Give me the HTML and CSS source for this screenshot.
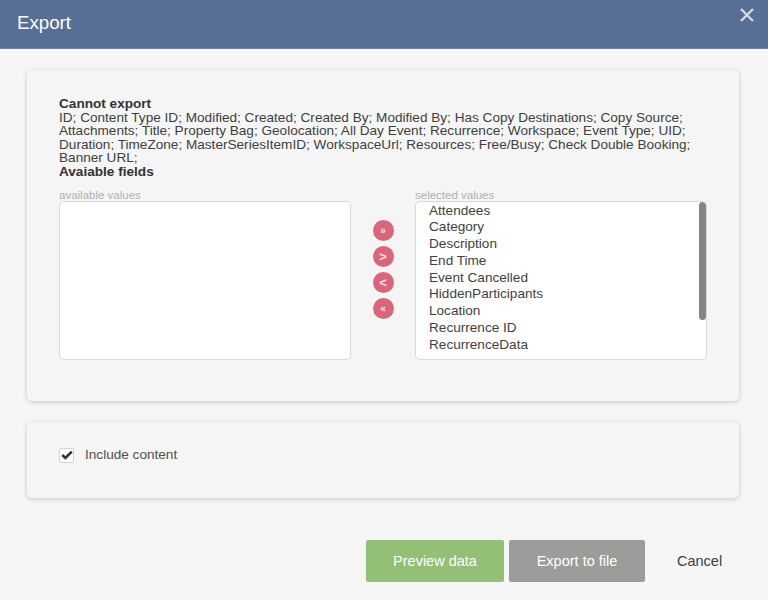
FILE: index.html
```html
<!DOCTYPE html>
<html lang="en">
<head>
<meta charset="utf-8">
<title>Export</title>
<link rel="stylesheet" href="styles.css">
</head>
<body>
<div class="dialog">
  <header class="titlebar">
    <h1 class="title">Export</h1>
    <button class="close" aria-label="Close">
      <svg viewBox="0 0 14 14" width="14" height="14"><path d="M1 1L13 13M13 1L1 13" stroke="#d5dce6" stroke-width="2.4" fill="none"/></svg>
    </button>
  </header>
  <main class="body">
    <section class="card card-fields">
      <div class="info">
        <strong>Cannot export</strong><br>
        ID; Content Type ID; Modified; Created; Created By; Modified By; Has Copy Destinations; Copy Source; Attachments; Title; Property Bag; Geolocation; All Day Event; Recurrence; Workspace; Event Type; UID; Duration; TimeZone; MasterSeriesItemID; WorkspaceUrl; Resources; Free/Busy; Check Double Booking; Banner URL;<br>
        <strong>Avaiable fields</strong>
      </div>
      <div class="picker">
        <div class="column">
          <div class="caption">available values</div>
          <div class="listbox"></div>
        </div>
        <div class="moves">
          <button class="move move-small">»</button>
          <button class="move">&gt;</button>
          <button class="move">&lt;</button>
          <button class="move move-small">«</button>
        </div>
        <div class="column">
          <div class="caption">selected values</div>
          <div class="listbox">
            <ul class="items">
              <li>Attendees</li>
              <li>Category</li>
              <li>Description</li>
              <li>End Time</li>
              <li>Event Cancelled</li>
              <li>HiddenParticipants</li>
              <li>Location</li>
              <li>Recurrence ID</li>
              <li>RecurrenceData</li>
            </ul>
            <div class="thumb"></div>
          </div>
        </div>
      </div>
    </section>
    <section class="card card-options">
      <label class="option">
        <span class="checkbox">
          <svg viewBox="0 0 12 10" width="12" height="10"><path d="M1.2 5L4.4 8L10.8 1.6" stroke="#333" stroke-width="2.6" fill="none"/></svg>
        </span>
        <span>Include content</span>
      </label>
    </section>
    <footer class="actions">
      <button class="btn btn-preview">Preview data</button>
      <button class="btn btn-export">Export to file</button>
      <button class="btn btn-cancel">Cancel</button>
    </footer>
  </main>
</div>
</body>
</html>
```
FILE: styles.css
```css
* { box-sizing: border-box; }
html, body { margin: 0; height: 100%; }
body {
  background: #f6f6f6;
  font-family: "Liberation Sans", Arial, sans-serif;
  color: #3f3f3f;
  overflow: hidden;
}
.dialog { width: 768px; height: 600px; display: flex; flex-direction: column; }
.titlebar {
  height: 49px;
  flex: none;
  background: #576f95;
  display: flex;
  justify-content: space-between;
  align-items: flex-start;
  padding: 0 14px 0 17px;
  border-bottom: 1px solid #6d83a5;
}
.title {
  margin: 12px 0 0;
  font-size: 18.7px;
  line-height: 21px;
  font-weight: normal;
  color: #fff;
}
.close {
  margin-top: 8px;
  padding: 0;
  width: 14px;
  height: 14px;
  border: 0;
  background: none;
  display: block;
}
.close svg { display: block; }
.body { flex: 1; padding: 21px 29px 0 27px; display: flex; flex-direction: column; }
.card {
  background: #f5f5f5;
  border-radius: 5px;
  box-shadow: 0 1px 5px rgba(0, 0, 0, 0.2);
  padding-left: 32px;
}
.card-fields { height: 331px; padding-top: 27px; padding-right: 31px; }
.info { font-size: 13.6px; line-height: 13.6px; width: 640px; }
.info strong { color: #333; }
.picker { display: flex; margin-top: 10px; }
.column { width: 292px; flex: none; }
.caption { font-size: 11.5px; line-height: 12px; color: #b0b0b0; }
.listbox {
  position: relative;
  height: 159px;
  background: #fff;
  border: 1px solid #d9d9d9;
  border-radius: 5px;
  overflow: hidden;
}
.moves {
  width: 64px;
  flex: none;
  display: flex;
  flex-direction: column;
  align-items: center;
  gap: 5px;
  padding-top: 31px;
}
.move {
  width: 21px;
  height: 21px;
  padding: 0;
  border: 0;
  border-radius: 50%;
  background: #d9667c;
  color: #f6e3e6;
  font: bold 13px/21px "Liberation Sans", Arial, sans-serif;
}
.move-small { font-size: 10px; }
.items {
  list-style: none;
  margin: 0;
  padding: 1px 0 0 13px;
  font-size: 13.6px;
  line-height: 16.75px;
}
.thumb {
  position: absolute;
  top: 0;
  right: 0;
  width: 7px;
  height: 118px;
  background: #858585;
  border-radius: 4px;
}
.card-options { margin-top: 21px; height: 76px; padding-top: 25px; }
.option { display: flex; align-items: center; gap: 11px; font-size: 13.6px; line-height: 16px; color: #505050; }
.checkbox {
  width: 15px;
  height: 15px;
  background: #fff;
  border: 1px solid #d4d4d4;
  border-radius: 2px;
  display: flex;
  align-items: center;
  justify-content: center;
}
.actions { display: flex; margin-top: 42px; }
.btn {
  height: 42px;
  border: 0;
  border-radius: 2px;
  padding: 0;
  font: 14.5px "Liberation Sans", Arial, sans-serif;
  color: #fff;
}
.btn-preview { width: 138px; margin-left: 339px; background: #93bf76; }
.btn-export { width: 136px; margin-left: 5px; background: #9c9c9a; }
.btn-cancel { background: none; color: #3f3f3f; margin-left: 32px; width: 45px; }
```
